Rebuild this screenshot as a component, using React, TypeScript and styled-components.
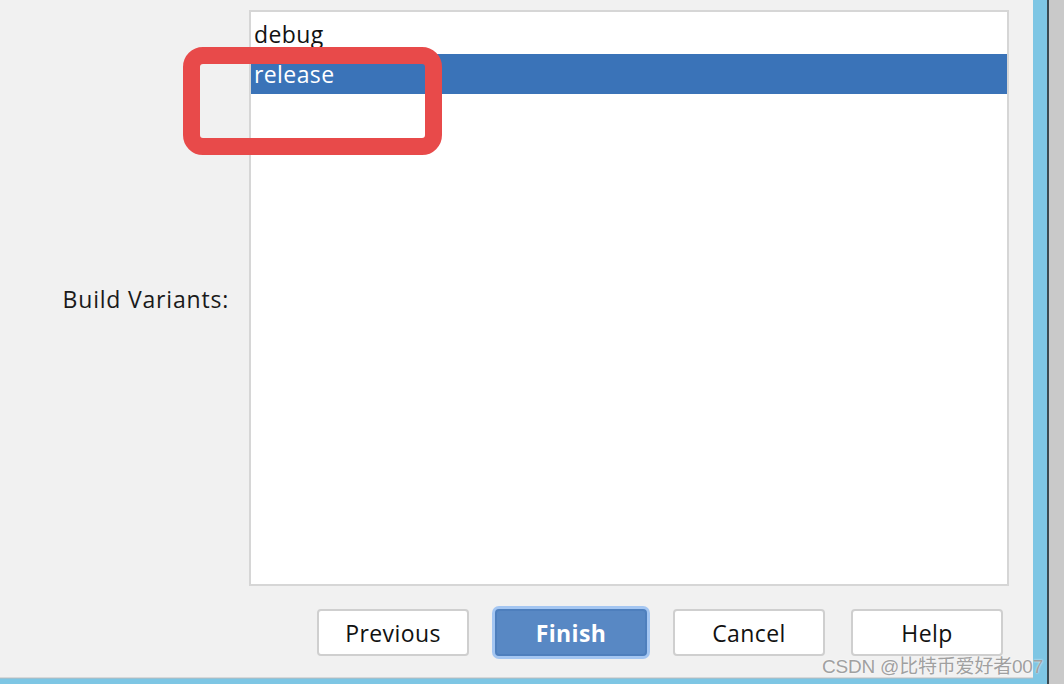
import React from "react";
import styled, { createGlobalStyle } from "styled-components";

const Global = createGlobalStyle`
  html, body { margin: 0; padding: 0; background: #c9c9c9; }
  body { font-family: "Open Sans", "Noto Sans", sans-serif; }
  * { box-sizing: border-box; }
`;

const Screen = styled.div`
  position: relative;
  display: flex;
  width: 1064px;
  height: 684px;
  overflow: hidden;
  background: #c9c9c9;
`;

const Frame = styled.div`
  display: flex;
  flex-direction: column;
  width: 1049px;
  height: 684px;
  padding: 0 14px 6px 0;
  background: #7ec6e4;
  border-right: 2px solid #3a4a52;
`;

const Dialog = styled.div`
  flex: 1;
  display: flex;
  flex-direction: column;
  background: #f1f1f1;
  border-bottom: 1px solid #d8d8d8;
  box-shadow: 0 1px 0 #9cc0d0;
  padding: 10px 24px 0 0;
`;

const FormRow = styled.div`
  display: grid;
  grid-template-columns: 229px 760px;
  column-gap: 20px;
  align-items: center;
`;

const Label = styled.div`
  text-align: right;
  font-size: 23px;
  font-weight: 500;
  color: #1a1a1a;
  padding-top: 2px;
  letter-spacing: 0.8px;
`;

const ListBox = styled.div`
  height: 576px;
  background: #fff;
  border: 2px solid #d6d6d6;
  padding-top: 2px;
`;

const Item = styled.div<{ $selected?: boolean }>`
  height: 40px;
  line-height: 40px;
  padding-left: 3px;
  font-size: 23px;
  font-weight: 500;
  letter-spacing: 0.4px;
  color: ${(p) => (p.$selected ? "#ffffff" : "#111")};
  background: ${(p) => (p.$selected ? "#3a73b8" : "transparent")};
`;

const ButtonRow = styled.div`
  display: flex;
  justify-content: flex-end;
  gap: 26px;
  margin-top: 23px;
  padding-right: 6px;
`;

const Button = styled.button<{ $primary?: boolean }>`
  width: 152px;
  height: 47px;
  border-radius: 4px;
  font-family: "Open Sans", "Noto Sans", sans-serif;
  font-size: 23px;
  letter-spacing: 0.4px;
  font-weight: ${(p) => (p.$primary ? 700 : 500)};
  color: ${(p) => (p.$primary ? "#ffffff" : "#111")};
  background: ${(p) => (p.$primary ? "#5888c4" : "#ffffff")};
  border: 2px solid ${(p) => (p.$primary ? "#4e7fbd" : "#cfcfcf")};
  box-shadow: ${(p) => (p.$primary ? "0 0 0 3px #a4c6f2" : "none")};
  padding: 0;
`;

const Highlight = styled.div`
  position: absolute;
  left: 183px;
  top: 47px;
  width: 259px;
  height: 108px;
  border: 17px solid #e84a4a;
  border-radius: 20px;
`;

const Watermark = styled.div`
  position: absolute;
  left: 822px;
  top: 651px;
  font-family: "Liberation Sans", "Noto Sans CJK SC", sans-serif;
  font-size: 19px;
  color: #a0a0a0;
  letter-spacing: -0.2px;
  text-shadow: 0 0 2px #ffffff;
  white-space: nowrap;
`;

export default function App() {
  return (
    <>
      <Global />
      <Screen>
        <Frame>
          <Dialog>
            <FormRow>
              <Label>Build Variants:</Label>
              <ListBox>
                <Item>debug</Item>
                <Item $selected>release</Item>
              </ListBox>
            </FormRow>
            <ButtonRow>
              <Button>Previous</Button>
              <Button $primary>Finish</Button>
              <Button>Cancel</Button>
              <Button>Help</Button>
            </ButtonRow>
          </Dialog>
        </Frame>
        <Highlight />
        <Watermark>CSDN @比特币爱好者007</Watermark>
      </Screen>
    </>
  );
}
